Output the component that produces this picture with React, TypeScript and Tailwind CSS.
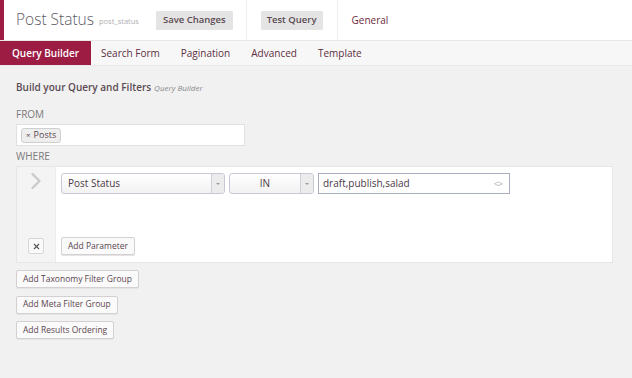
import { ChevronRight, X } from "lucide-react";

const font = { fontFamily: '"Open Sans", "Noto Sans", sans-serif' };

function SmallButton({ label }: { label: string }) {
  return (
    <button
      type="button"
      className="h-[18px] rounded-[2px] border border-[#d4d0d2] bg-[#fafafa] px-[6px] text-[8.5px] leading-none text-[#5b4650] shadow-[0_1px_0_#e4e4e4]"
    >
      {label}
    </button>
  );
}

function Select({ label, width, center = false }: { label: string; width: string; center?: boolean }) {
  return (
    <div
      className={`flex h-[21px] ${width} items-stretch overflow-hidden rounded-[3px] border border-[#c9c8d6] bg-gradient-to-b from-white to-[#f2f2f2]`}
    >
      <span
        className={`flex flex-1 items-center text-[10px] text-[#4c3a45] ${center ? "justify-center" : "pl-[6px]"}`}
      >
        {label}
      </span>
      <span className="flex w-[13px] items-center justify-center border-l border-[#d0d0d8] bg-[#ececec]">
        <span className="block h-0 w-0 border-x-[2px] border-t-[2px] border-x-transparent border-t-[#9a9aa6]" />
      </span>
    </div>
  );
}

export default function App() {
  const tabs = ["Search Form", "Pagination", "Advanced", "Template"];

  return (
    <div className="h-[378px] w-[632px] overflow-hidden bg-[#f1f1f1]" style={font}>
      {/* header */}
      <div className="flex h-[40px] items-stretch bg-white">
        <div className="w-[4px] bg-[#9c1c44]" />
        <div className="flex items-center pl-[12px]">
          <span className="text-[15.5px] font-light leading-none text-[#5b5b63]">Post Status</span>
          <span className="ml-[5px] mt-[3px] text-[7.5px] text-[#b0b0b0]">post_status</span>
          <span className="ml-[17px] flex h-[19px] items-center rounded-[1px] bg-[#e4e4e4] px-[7px] text-[9.5px] font-semibold text-[#5a4a52]">
            Save Changes
          </span>
        </div>
        <div className="ml-[13px] w-px bg-[#efefef]" />
        <div className="flex items-center px-[14px]">
          <span className="flex h-[19px] items-center rounded-[1px] bg-[#e4e4e4] px-[6px] text-[9.5px] font-semibold text-[#5a4a52]">
            Test Query
          </span>
        </div>
        <div className="w-px bg-[#efefef]" />
        <div className="flex items-center pl-[14px] text-[10px] text-[#6d2a3c]">General</div>
      </div>

      {/* tabs */}
      <div className="flex h-[26px] items-stretch border-y border-[#e8e8e8] bg-[#f7f7f7]">
        <div className="flex w-[91px] items-center justify-center bg-[#9c1c44] text-[10px] font-semibold text-white">
          Query Builder
        </div>
        {tabs.map((t, i) => (
          <div
            key={t}
            className={`flex items-center text-[10px] text-[#5d2f3e] ${
              ["ml-[10px]", "ml-[21px]", "ml-[21px]", "ml-[21px]"][i]
            }`}
          >
            {t}
          </div>
        ))}
      </div>

      {/* body */}
      <div className="px-[16px] pt-[14px]">
        <div className="flex items-baseline gap-[3px]">
          <span className="text-[10px] font-semibold text-[#5a4a52]">Build your Query and Filters</span>
          <span className="text-[8px] italic text-[#8a8a8a]">Query Builder</span>
        </div>

        <div className="mt-[13px] text-[10px] leading-[12px] text-[#7a7a7a]">FROM</div>
        <div className="mt-[4px] flex h-[22px] w-[229px] items-center border border-[#e0e0e0] bg-white px-[4px]">
          <span className="flex h-[15px] items-center gap-[3px] rounded-[3px] border border-[#cfcfcf] bg-[#eeeeee] px-[4px] text-[9px] text-[#5b4650]">
            <span className="text-[8px]">×</span>Posts
          </span>
        </div>

        <div className="mt-[4px] text-[10px] leading-[12px] text-[#7a7a7a]">WHERE</div>
        <div className="mt-[4px] flex h-[97px] w-[597px] border border-[#e6e6e6] bg-white">
          <div className="flex w-[39px] flex-col items-center justify-between border-r border-[#ececec] bg-[#f4f4f4] pb-[8px]">
            <ChevronRight width={28} height={28} strokeWidth={2} className="text-[#cacaca]" />
            <span className="flex h-[16px] w-[16px] items-center justify-center rounded-[2px] border border-[#d6d6d6] bg-[#fafafa]">
              <X width={9} height={9} strokeWidth={3} className="text-[#555]" />
            </span>
          </div>
          <div className="flex flex-1 flex-col justify-between pb-[7px] pl-[5px] pt-[6px]">
            <div className="flex items-center gap-[4px]">
              <Select label="Post Status" width="w-[164px]" />
              <Select label="IN" width="w-[85px]" center />
              <div className="flex h-[21px] w-[192px] items-center justify-between border border-[#a9adc2] bg-white pl-[4px] pr-[7px] text-[10px] text-[#4c3a45]">
                <span>draft,publish,salad</span>
                <span className="text-[9px] tracking-[-1px] text-[#b0b0b0]">&lt;&gt;</span>
              </div>
            </div>
            <div>
              <SmallButton label="Add Parameter" />
            </div>
          </div>
        </div>

        <div className="mt-[7px] flex flex-col items-start gap-[7.5px]">
          <SmallButton label="Add Taxonomy Filter Group" />
          <SmallButton label="Add Meta Filter Group" />
          <SmallButton label="Add Results Ordering" />
        </div>
      </div>
    </div>
  );
}
